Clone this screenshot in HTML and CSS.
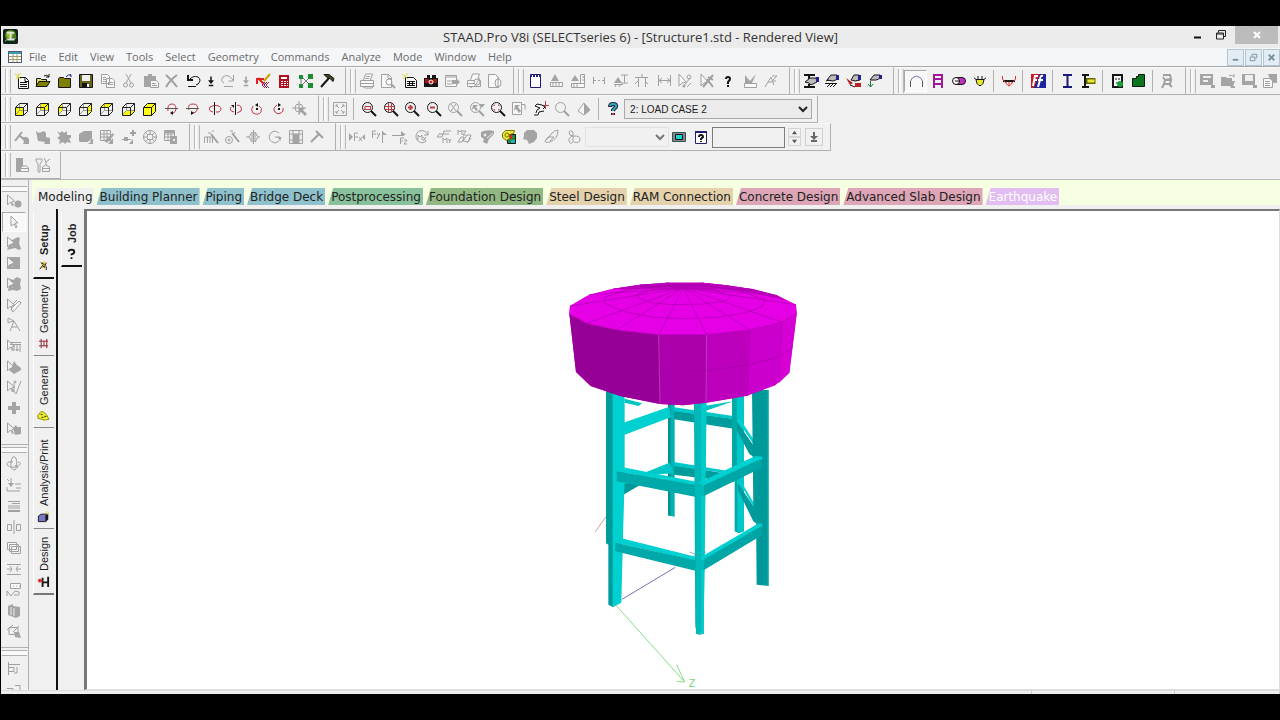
FILE: index.html
```html
<!DOCTYPE html>
<html lang="en">
<head>
<meta charset="utf-8">
<title>STAAD.Pro V8i</title>
<link rel="stylesheet" href="styles.css">
</head>
<body>
<div class="app">
<header class="titlebar">
  <svg class="logo" viewBox="0 0 16 16"><rect width="16" height="16" rx="2" fill="#10241c"/><circle cx="8" cy="7" r="6" fill="#4b7d20"/><circle cx="7" cy="6" r="3.500" fill="#93b82c"/><path d="M4 3h8v2H9v5h3v2H4v-2h3V5H4z" fill="#dce3cf"/><path d="M2 13l3-2M11 13l3-4" stroke="#81a3a8"/></svg>
  <h1 class="title">STAAD.Pro V8i (SELECTseries 6) - [Structure1.std - Rendered View]</h1>
  <div class="winbtns">
    <button class="win" aria-label="Minimize"><svg viewBox="0 0 12 12"><path d="M3 8.500h7" stroke="#111" stroke-width="2"/></svg></button>
    <button class="win" aria-label="Restore"><svg viewBox="0 0 12 12"><path d="M1.500 4h7v6h-7zM1.500 5h7M3.500 3.500V1.500h7v6h-2" stroke="#222"/></svg></button>
    <button class="win close" aria-label="Close"><svg viewBox="0 0 12 12"><path d="M3 3l6 6M9 3l-6 6" stroke="#fff" stroke-width="2"/></svg></button>
  </div>
</header>
<nav class="menubar">
  <svg class="docicon" viewBox="0 0 14 12"><rect x=".5" y=".5" width="13" height="11" fill="#fffef0" stroke="#557"/><path d="M1 2h12" stroke="#38a0ac" stroke-width="2"/><path d="M1 5.500h12M1 8.500h12M5 3v8M9 3v8" stroke="#a09b72"/></svg>
  <button>File</button><button>Edit</button><button>View</button><button>Tools</button><button>Select</button><button>Geometry</button><button>Commands</button><button>Analyze</button><button>Mode</button><button>Window</button><button>Help</button>
  <div class="mdi">
    <button aria-label="Minimize document"><svg viewBox="0 0 12 12"><path d="M3 8.500h6" stroke="#78909c" stroke-width="2"/></svg></button>
    <button aria-label="Restore document"><svg viewBox="0 0 12 12"><path d="M2.500 5.500h5v4h-5zM4.500 5V2.500h5v4H8" stroke="#78909c"/></svg></button>
    <button aria-label="Close document"><svg viewBox="0 0 12 12"><path d="M3 3l6 6M9 3l-6 6" stroke="#78909c" stroke-width="2"/></svg></button>
  </div>
</nav>

<div class="row">
  <div class="bar file" role="toolbar" aria-label="File"><i class="grip"></i>
    <button aria-label="New"><svg viewBox="0 0 16 16"><path class="k w" d="M4.500 4.500h7l3 3v8h-10zM11 4.500v4h3"/><path class="k" d="M6 9.500h7M6 11.500h7M6 13.500h7"/><path class="y" d="M1 1l6 5M7 0L2 6M4 0v6"/></svg></button>
    <button aria-label="Open"><svg viewBox="0 0 16 16"><path fill="#d8d86a" class="k" d="M1.500 13V5.500h4l1 1h5V9"/><path class="k" fill="#808000" d="M1 13.500l3-5h11l-3 5z"/><path class="k" d="M9 3q3-2 5 1v-3M14 4h-3"/></svg></button>
    <button aria-label="Close"><svg viewBox="0 0 16 16"><path class="k" fill="#808000" d="M1.500 14.500v-9l1-1h4l1 1h6v9z"/><path d="M9 4q2-3 5-2l-1-1M14 2v2" stroke="#112288"/></svg></button>
    <button aria-label="Save"><svg viewBox="0 0 16 16"><path class="k" fill="#63631c" d="M1.500 1.500h13v13h-13z"/><path fill="#eee" stroke="none" d="M4 2h8v6H4zM9 11h2v3H9z"/><path class="fk" d="M4 10h5v4H4z"/></svg></button>
    <button aria-label="Copy"><svg viewBox="0 0 16 16"><path class="w" d="M1.500 1.500h6l2 2v7h-8zM6.500 5.500h6l2 2v7h-8zM3 4.500h3M3 6.500h3M8 9.500h5M8 11.500h5M3 8.500h3"/></svg></button>
    <button aria-label="Cut"><svg viewBox="0 0 16 16"><path d="M5 1l5 9M10 1L5 10"/><circle cx="4.500" cy="12" r="2"/><circle cx="10.500" cy="12" r="2"/></svg></button>
    <button aria-label="Paste"><svg viewBox="0 0 16 16"><path class="fg" d="M1 3h4V1h4v2h4v11H1z"/><path class="w" d="M7.500 7.500h6l2 2v5h-8zM9 10.500h4M9 12.500h5"/></svg></button>
    <button aria-label="Delete"><svg viewBox="0 0 16 16"><path stroke-width="2" d="M2 2q6 5 11 12M13 2Q6 7 2 14"/></svg></button>
    <button aria-label="Undo"><svg viewBox="0 0 16 16"><path class="k" stroke-width="2" d="M2 2v5h5"/><path class="k" d="M3 7q4-5 9-3 4 3 0 7l-2 1M2 13.500h8" /></svg></button>
    <button class="narrow" aria-label="Undo list"><svg viewBox="0 0 8 16"><path class="k" stroke-width="2" d="M4 2v6M1 14h6"/><path class="fk" d="M0 7h8l-4 5z"/></svg></button>
    <button aria-label="Redo"><svg viewBox="0 0 16 16"><path d="M13.500 2v6h-5M13 7Q8 0 3 4q-3 4 1 6M4 13.500h9"/></svg></button>
    <button class="narrow" aria-label="Redo list"><svg viewBox="0 0 8 16"><path stroke-width="2" d="M4 2v6M1 14h6"/><path class="fg" d="M0 7h8l-4 5z"/></svg></button>
    <button aria-label="Structure wizard"><svg viewBox="0 0 16 16"><path stroke="#cda000" stroke-width="2" d="M15 1L9 8"/><path d="M2 6h7M3 5l6 6M2 5v6" stroke="#e02020" stroke-width="2"/><path d="M10 9l-3 3 3 3M14 9l-3 3 3 3" stroke="#c01840"/><path d="M12 9l-3 3 3 3" stroke="#202080"/></svg></button>
    <button aria-label="Calculator"><svg viewBox="0 0 16 16"><path fill="#b01020" stroke="none" d="M3 2h10v13H3z"/><path fill="#fff" stroke="none" d="M5 4h6v2H5z"/><path stroke="#fff" stroke-dasharray="2 1" d="M5 8.500h7M5 10.500h7M5 12.500h7"/></svg></button>
    <button aria-label="Nodes"><svg viewBox="0 0 16 16"><path d="M3 3l10 10M3 13L13 3M3 13V3" stroke="#777"/><path fill="#189030" stroke="none" d="M1 2h4v4H1zM10 1h5v5h-5zM1 11h4v4H1zM10 10h5v5h-5z"/></svg></button>
    <button aria-label="Tools"><svg viewBox="0 0 16 16"><path class="k" stroke-width="2" d="M2 14l8-9"/><path fill="#444020" class="k" d="M5 1.500h5l5 4-1 3-3-3-3-1z"/></svg></button>
  </div>
  <div class="bar print" role="toolbar" aria-label="Print"><i class="grip"></i>
    <button aria-label="Print"><svg viewBox="0 0 16 16"><path class="w" d="M4.500 7l2-6h7l-2 6M1.500 7.500h13v6h-13zM1 10.500h13M3 13l3 2h7l2-3M7 3.500h4M6 5.500h4"/></svg></button>
    <button aria-label="Preview"><svg viewBox="0 0 16 16"><path class="w" d="M1.500 1.500h7l3 3v10h-10zM8 1.500v4h3"/><circle cx="9" cy="9" r="3"/><path stroke-width="2" d="M11 11l4 4"/></svg></button>
    <button aria-label="Report setup"><svg viewBox="0 0 16 16"><path class="k w" d="M3.500 4.500h8l3 3v7h-11z"/><path class="k" d="M5 8.500h8M5 10.500h8M5 12.500h8M7.500 8v5M10.500 8v5"/><path class="y" d="M0 1l6 5M6 0L1 6"/></svg></button>
    <button aria-label="Take picture"><svg viewBox="0 0 16 16"><path class="fk" d="M1 5h3V2h3v3h2V2h4v3h2v9H1z"/><path fill="#a01818" stroke="none" d="M2 6h4v4H2zM10 6h4v4h-4z"/><circle cx="8" cy="9" r="2" fill="#c22" stroke="#fff"/></svg></button>
    <button aria-label="Export view"><svg viewBox="0 0 16 16"><path class="w" d="M1.500 2.500h11v11h-11z"/><path d="M1 4h12M3 8h5M3 11h5"/><path class="fg" d="M8 7h4V5l4 4-4 4v-2H8z"/></svg></button>
    <button aria-label="Print report"><svg viewBox="0 0 16 16"><path class="w" d="M4.500 7l2-6h7l-2 6M1.500 7.500h13v6h-13zM1 10.500h13M3 13l3 2"/><circle class="w" cx="11" cy="9" r="3"/><path d="M8 14l6-9"/></svg></button>
    <button aria-label="Report preview"><svg viewBox="0 0 16 16"><path class="w" d="M1.500 1.500h7l3 3v10h-10z"/><ellipse class="w" cx="11" cy="10" rx="3" ry="4"/><path d="M11 4v11"/></svg></button>
  </div>
  <div class="bar annot" role="toolbar" aria-label="Annotation"><i class="grip"></i>
    <button aria-label="Input file"><svg viewBox="0 0 16 16"><path fill="#fff" stroke="#1a1a78" d="M3.500 1.500h10v13h-10z"/><path d="M3 3h11" stroke="#22228a" stroke-width="2" stroke-dasharray="2 1"/></svg></button>
    <button aria-label="Ruler"><svg viewBox="0 0 16 16"><path class="fg" d="M7 1l4 7H3z"/><path class="w" d="M2.500 9.500h12v4h-12zM5 10v3M8 10v3M11 10v3"/></svg></button>
    <button aria-label="Dimension beam"><svg viewBox="0 0 16 16"><path class="fg" d="M5 2l4 6H1z"/><path class="w" d="M1.500 10.500h13v4h-13zM10.500 1.500h4v9h-4zM4 11v3M7 11v3M12 4h2M12 7h2"/></svg></button>
    <button aria-label="Node distance"><svg viewBox="0 0 16 16"><path d="M2.500 4v7M13.500 4v7M2 7.500h3M7 7.500h2M11 7.500h3"/></svg></button>
    <button aria-label="Dimension"><svg viewBox="0 0 16 16"><path class="fg" d="M5 4l4 6H1z"/><path d="M1 11.500h9M8 2h7M11.500 2v8M8 10h7M3 12l-1 2M7 12l-1 2"/></svg></button>
    <button aria-label="Beam length"><svg viewBox="0 0 16 16"><path d="M1 4.500h13M4.500 5v9M11.500 5v9M8 1v3M1 11l3-3M14 11l-3-3"/></svg></button>
    <button aria-label="Horizontal dimension"><svg viewBox="0 0 16 16"><path d="M2.500 2v11M14.500 2v11M3 7.500h11M6 5L3 7.500 6 10M11 5l3 2.500-3 2.500"/></svg></button>
    <button aria-label="Pick node"><svg viewBox="0 0 16 16"><path class="w" d="M2 1v12l3-3 4-1zM6 14l7-9M10 14l4-4"/><circle cx="12" cy="4" r="2"/><circle class="fg" cx="7" cy="13" r="1.500"/></svg></button>
    <button aria-label="Cut dimension"><svg viewBox="0 0 16 16"><path class="w" d="M2 1v12l3-3 4-1z"/><path stroke-width="2" d="M14 2L4 14M8 6l6 8M9 4l5 3"/></svg></button>
    <button aria-label="Query"><svg viewBox="0 0 16 16"><path class="k" stroke-width="2" d="M6 6q0-2 2-2t2 2q0 1-2 3v2M8 12v2"/></svg></button>
    <button aria-label="Label diagrams"><svg viewBox="0 0 16 16"><path class="w" d="M2.500 10.500h12v4h-12z"/><path class="fg" d="M3 2l5 6 6-7-4 9H3z"/></svg></button>
    <button aria-label="Label settings"><svg viewBox="0 0 16 16"><path d="M2 14L8 4l3 8M5 9h4M9 3h5l-5 5h4"/></svg></button>
  </div>
  <div class="bar props" role="toolbar" aria-label="Properties"><i class="grip"></i>
    <button aria-label="Section property"><svg viewBox="0 0 16 16"><path class="k" stroke-width="2" d="M1 2h11M1 14h11M6 3v3M6 11v2"/><path class="k" fill="#bbb" d="M2 9l5-4h6l1 4-6 3-2-2z"/><path fill="#228" stroke="none" d="M13 4h3v5h-3z"/></svg></button>
    <button aria-label="Supports"><svg viewBox="0 0 16 16"><path fill="#bbb" class="k" d="M3 7l4-5h6l1 4-5 2z"/><path fill="#228" stroke="none" d="M12 2h3v5h-3z"/><path class="k" d="M1 10.500h12M3 14l3-3M6 14l3-3M9 14l3-3M2 8l3-1"/></svg></button>
    <button aria-label="Materials"><svg viewBox="0 0 16 16"><path fill="#bbb" class="k" d="M5 7l3-5h5l1 5-5 1z"/><path fill="#228" stroke="none" d="M12 2h3v5h-3z"/><path fill="#b22" stroke="none" d="M0 5l7 5-3 2zM9 10h6v4H9z"/><path class="k" d="M4 12l5 2"/></svg></button>
    <button aria-label="Loading"><svg viewBox="0 0 16 16"><path fill="#bbb" class="k" d="M3 7l4-5h6l1 3-5 2z"/><path fill="#228" stroke="none" d="M12 2h3v4h-3z"/><path d="M3.500 8v6M1 11l2.500 3L6 11" stroke="#158030"/></svg></button>
  </div>
  <div class="bar modes" role="toolbar" aria-label="Modes"><i class="grip"></i>
    <button class="on" aria-label="Beam page"><svg viewBox="0 0 16 16"><path stroke="#7777bb" d="M2.500 8q1-4 6-5 5 1 6 5"/><path stroke="#555" d="M2.500 8v6M14.500 8v6"/></svg></button>
    <button aria-label="Frame"><svg viewBox="0 0 16 16"><path stroke="#a0189a" stroke-width="2" d="M4 15V2h8v13M4 6h8M4 11h8"/></svg></button>
    <button aria-label="Cylinder"><svg viewBox="0 0 16 16"><path class="k" fill="#c030c0" d="M5 4.500h6a3.500 3.500 0 010 7H5z"/><ellipse class="k w" cx="5" cy="8" rx="3.500" ry="3.500"/><path class="k" d="M4 8h5"/></svg></button>
    <button aria-label="Loads"><svg viewBox="0 0 16 16"><path class="k" fill="#e8e830" d="M4 6.500h8l-1 4-2 2H7l-2-2z"/><path class="k" d="M2 5l3 2M14 5l-3 2M6 3v4M10 3v4"/></svg></button>
    <i class="sep"></i>
    <button aria-label="Bending moment"><svg viewBox="0 0 16 16"><path class="k" stroke-width="2" d="M2 8h12"/><path stroke="#dd3030" d="M1.500 3v3l5 6 1.500 1 1.500-1 5-6V3M5 9v1M8 9v4M11 9v1"/></svg></button>
    <i class="sep"></i>
    <button aria-label="Foundation"><svg viewBox="0 0 16 16"><path fill="#c01c28" stroke="none" d="M1 1h10L5 15H1z"/><path fill="#1c24a0" stroke="none" d="M10 1h6v14H4z"/><path stroke="#fff" stroke-width="2" d="M8 3H5L3 13M4 7h3M13 3q-3-1-3 4l-2 7M8 7h5"/></svg></button>
    <i class="sep"></i>
    <button aria-label="Steel"><svg viewBox="0 0 16 16"><path stroke="#181878" stroke-width="2" d="M4 2h9M8.500 2v12M4 14h9"/></svg></button>
    <button aria-label="Connection"><svg viewBox="0 0 16 16"><path fill="#e8e830" stroke="#666600" d="M6.500 5.500h9M6.500 10.500h9M6.500 5v6M7 6h8v4H7z"/><path class="k" stroke-width="2" d="M2 2h7M5 2v12M2 14h7"/></svg></button>
    <i class="sep"></i>
    <button aria-label="Concrete"><svg viewBox="0 0 16 16"><path class="k w" stroke-width="2" d="M4 2h9v12H4z"/><path class="k" d="M7 5v2M10 5v2M7 10h3"/><circle cx="11" cy="11" r="3" fill="#15a03a" stroke="none"/></svg></button>
    <button aria-label="Slab"><svg viewBox="0 0 16 16"><path fill="#0b761e" class="k" d="M2.500 13.500v-8h4v-2h2v-2h6v12z"/></svg></button>
    <i class="sep"></i>
    <button aria-label="Earthquake"><svg viewBox="0 0 16 16"><path stroke-width="2" d="M4 2h7l1 4-6 1-2-3M6 7h6l-1 4H5l1-4M5 11l-2 4M10 11l3 3"/></svg></button>
  </div>
  <div class="bar tail" role="toolbar" aria-label="Views"><i class="grip"></i>
    <button aria-label="New view"><svg viewBox="0 0 16 16"><path class="fg" d="M1 1h13v11h2v3h-4v-3H1z"/><path fill="#eee" stroke="none" d="M4 3h8v2H4zM4 7h5v2H4z"/></svg></button>
    <button aria-label="Open view"><svg viewBox="0 0 16 16"><path class="fg" d="M1 4h5l1 1h5v3h3l-2 5h2v2h-4l-1-2H1z"/><path d="M9 3q3-2 5 1v-3"/></svg></button>
    <button aria-label="Save view"><svg viewBox="0 0 16 16"><path class="fg" d="M1 1h13v11h2v3h-4v-3H1z"/><path fill="#eee" stroke="none" d="M4 2h8v6H4z"/></svg></button>
    <button aria-label="View options"><svg viewBox="0 0 16 16"><path class="w" d="M1.500 5.500h9v9h-9zM3 8.500h5M3 10.500h5M3 12.500h5"/><path class="fg" d="M6 1h9v9h-3L8 6z"/></svg></button>
  </div>
</div>

<div class="row">
  <div class="bar rotate" role="toolbar" aria-label="Rotate"><i class="grip"></i>
    <button aria-label="Front view"><svg viewBox="0 0 16 16"><path class="yf" d="M1 6h9v8H1z"/><use href="#cube"/></svg></button>
    <button aria-label="Back view"><svg viewBox="0 0 16 16"><path class="yf" d="M5 2h9v8H5z"/><use href="#cube"/></svg></button>
    <button aria-label="Left view"><svg viewBox="0 0 16 16"><path class="yf" d="M1 6l4-4v8l-4 4z"/><use href="#cube"/></svg></button>
    <button aria-label="Right view"><svg viewBox="0 0 16 16"><path class="yf" d="M9 6l5-4v8l-5 4z"/><use href="#cube"/></svg></button>
    <button aria-label="Top view"><svg viewBox="0 0 16 16"><path class="yf" d="M1 6l4-4h9l-4 4z"/><use href="#cube"/></svg></button>
    <button aria-label="Bottom view"><svg viewBox="0 0 16 16"><path class="yf" d="M1 14l4-4h9l-4 4z"/><use href="#cube"/></svg></button>
    <button aria-label="Isometric view"><svg viewBox="0 0 16 16"><path class="k" fill="#ffff18" d="M1.500 6.500l4-4h8v8l-4 4h-8zM2 6.500h7.500v8M9.500 6.500l4-4"/></svg></button>
    <button aria-label="Rotate up"><svg viewBox="0 0 16 16"><path class="r" d="M4 10q-1-7 4-7 4 0 4 5-1 5-5 4"/><path d="M1 7.500h13" stroke="#555"/><path class="fk" d="M9 10v4l-3-2z"/></svg></button>
    <button aria-label="Rotate down"><svg viewBox="0 0 16 16"><path class="r" d="M4 9Q2 3 8 3t4 6q-1 3-4 3"/><path d="M1 7.500h13" stroke="#555"/><path class="fk" d="M6 10l3 2-3 2z"/></svg></button>
    <button aria-label="Rotate left"><svg viewBox="0 0 16 16"><path class="r" d="M6 11Q1 10 3 6q4-3 9-1 4 3 0 6H9"/><path class="k" d="M7.500 1v13"/></svg></button>
    <button aria-label="Rotate right"><svg viewBox="0 0 16 16"><path class="r" d="M6 11Q1 10 3 6M9 4q6 1 4 6l-4 2"/><path class="k" d="M7.500 1v13"/><path class="fk" d="M3 4h3v3z"/></svg></button>
    <button aria-label="Spin left"><svg viewBox="0 0 16 16"><path class="r" d="M4 5q-3 4 0 7 5 3 8-1 2-4-2-6"/><path class="fk" d="M9 2v4L6 4zM7 7h2v2H7z"/></svg></button>
    <button aria-label="Spin right"><svg viewBox="0 0 16 16"><path class="r" d="M6 4Q1 7 4 11q4 4 8-1V7"/><path class="fk" d="M7 2l3 2-3 2zM7 7h2v2H7z"/></svg></button>
    <button aria-label="Toggle rotation"><svg viewBox="0 0 16 16"><circle cx="7" cy="7" r="4"/><path d="M7 0v14M0 7h14"/><path class="fg" d="M7 7h6l-2 2 4 4-2 2-4-4-2 2z"/></svg></button>
  </div>
  <div class="bar zoom" role="toolbar" aria-label="Zoom"><i class="grip"></i>
    <button aria-label="Whole structure"><svg viewBox="0 0 16 16"><path d="M1.500 1.500h13v13h-13zM4 4l3 3M12 4L9 7M4 12l3-3M12 12L9 9M4 6V4h2M10 4h2v2M4 10v2h2M12 10v2h-2"/></svg></button>
    <i class="sep"></i>
    <button aria-label="Zoom window"><svg viewBox="0 0 16 16"><use class="k" href="#lens"/><path class="r" d="M4 5.500h6M3 8.500h6M4 5v3M9.500 5v4"/></svg></button>
    <button aria-label="Zoom factor"><svg viewBox="0 0 16 16"><use class="k" href="#lens"/><path class="r" d="M5.500 2v9M8.500 2v9M2 5.500h9M2 8.500h9"/></svg></button>
    <button aria-label="Zoom in"><svg viewBox="0 0 16 16"><use class="k" href="#lens"/><path class="r" stroke-width="2" d="M4 6.500h5M6.500 4v5"/></svg></button>
    <button aria-label="Zoom out"><svg viewBox="0 0 16 16"><use class="k" href="#lens"/><path class="r" stroke-width="2" d="M4 6.500h5"/></svg></button>
    <button aria-label="Zoom extents"><svg viewBox="0 0 16 16"><use href="#lens"/><path d="M4 3l5 7M9 3l-5 7"/></svg></button>
    <button aria-label="Zoom previous"><svg viewBox="0 0 16 16"><use href="#lens"/><path class="fg" d="M4 4h5L7 6l2 3-2 1-2-3-2 2zM10 3h6l-3 4z"/></svg></button>
    <button aria-label="Zoom all"><svg viewBox="0 0 16 16"><use class="k" href="#lens"/><path class="r" d="M4 5V4h1M8 4h1v1M4 8v1h1M8 9h1V8"/></svg></button>
    <button aria-label="Previous view"><svg viewBox="0 0 16 16"><path class="w" d="M1.500 1.500h9v12h-9zM10 3.500h4v5"/><path class="fg" d="M4 4h5L7 6l3 4-2 2-3-4-2 2z"/></svg></button>
    <button aria-label="Pan"><svg viewBox="0 0 16 16"><path class="r" d="M12.500 0v8M9 4.500h7"/><path class="k" d="M1 14h4l1-3 5-1M3 12l1-3 3-2-5-2 2-2 5 1 3 2-2 2"/></svg></button>
    <button aria-label="Magnifier"><svg viewBox="0 0 16 16"><use href="#lens"/></svg></button>
    <button aria-label="Perspective"><svg viewBox="0 0 16 16"><path class="w" d="M8 2L2 10l6 4 6-5z"/><path class="fg" d="M8 2v12l6-5z"/></svg></button>
    <i class="sep"></i>
    <button aria-label="Help"><svg viewBox="0 0 16 16"><path stroke="#22224e" stroke-width="4" d="M5 6q0-3 3-3 4 0 3 3l-3 3v1M8 12v2"/><path stroke="#32a9ae" stroke-width="2" d="M5 5q0-2 3-2 4 0 3 3l-3 3v1"/><path stroke="#c33" stroke-width="2" d="M8 12v2"/></svg></button>
    <select class="loadcase" aria-label="Load case"><option>2: LOAD CASE 2</option></select>
  </div>
</div>

<div class="row">
  <div class="bar geom" role="toolbar" aria-label="Geometry"><i class="grip"></i>
    <button aria-label="Add beams"><svg viewBox="0 0 16 16"><path stroke-width="2" d="M1 12L8 3M6 7l6 5"/><path class="fg" d="M8 8h5l2 2v5h-6l1-2z"/></svg></button>
    <button aria-label="Add plates"><svg viewBox="0 0 16 16"><path class="fg" d="M1 2l3 2 5-2 2 2v4l4 1v6H9l1-2-7-1z"/></svg></button>
    <button aria-label="Mesh"><svg viewBox="0 0 16 16"><path class="fg" d="M1 2l3 2 2-2 2 2 3-2v4h4v3h-2l2 5-4-1-2 2-2-2-4 2 1-4-3-2 3-2z"/></svg></button>
    <button aria-label="Solids"><svg viewBox="0 0 16 16"><path class="fg" d="M1 5l5-3h8v7l-4 4H2L1 12zM13 10h2v5H9l3-1z"/></svg></button>
    <button aria-label="Surface"><svg viewBox="0 0 16 16"><path d="M1.500 1.500h10v10h-10zM5 2v9M8 2v9M2 5h9M2 8h9"/><path class="fg" d="M5 12L14 4l1 2-7 8zM14 9v6H9z"/></svg></button>
    <button aria-label="Insert node"><svg viewBox="0 0 16 16"><path d="M1 10.500h9"/><path stroke-width="2" d="M12 1v6M9 4h6"/><path class="fg" d="M3 8h4v4H3zM12 10v5H8z"/></svg></button>
    <button aria-label="Sphere mesh"><svg viewBox="0 0 16 16"><circle cx="8" cy="8" r="6.500"/><circle cx="8" cy="8" r="3"/><path d="M8 1v5M8 10v5M1 8h4M11 8h4M3 3l3 3M10 10l3 3M13 3l-3 3M3 13l3-3"/></svg></button>
    <button aria-label="Grid"><svg viewBox="0 0 16 16"><path d="M1.500 1.500h10v10h-10zM5 2v9M8 2v9M2 5h9M2 8h9"/><path class="fg" d="M7 7h7v8H7zM1 1h10v3H1z"/><path fill="#eee" stroke="none" d="M10 10h2v2h-2z"/></svg></button>
  </div>
  <div class="bar gen" role="toolbar" aria-label="Generate"><i class="grip"></i>
    <button aria-label="Translational repeat"><svg viewBox="0 0 16 16"><path d="M1.500 14V8h8v6M4.500 8v6M7 8v6M5 4h3M10 1v2"/><path stroke-width="2" d="M8 5l7 9"/></svg></button>
    <button aria-label="Circular repeat"><svg viewBox="0 0 16 16"><circle cx="5" cy="11" r="3.500"/><circle cx="5" cy="11" r="1"/><path d="M6 2h3M9 6l2-3"/><path stroke-width="2" d="M8 4l7 9"/></svg></button>
    <button aria-label="Mirror"><svg viewBox="0 0 16 16"><path d="M8.500 1v14M7 3v10L4 8zM10 3v10l3-5zM1 8h3M13 8h2"/></svg></button>
    <button aria-label="Rotate"><svg viewBox="0 0 16 16"><path d="M12 4Q7 0 3 5q-3 7 5 9l4-2M8 8h5v4"/><path class="fg" d="M10 8h5l-2 3z"/></svg></button>
    <button aria-label="Grid select"><svg viewBox="0 0 16 16"><path d="M1.500 1.500h13v13h-13zM2 5h12M2 11h12M5 2v12M11 2v12"/><path class="fg" d="M5 5h6v9H5z"/></svg></button>
    <button aria-label="Split beam"><svg viewBox="0 0 16 16"><path stroke-width="2" d="M2 13L10 5M7 2l7 7"/></svg></button>
  </div>
  <div class="bar result" role="toolbar" aria-label="Results"><i class="grip"></i>
    <button aria-label="Axial force"><svg viewBox="0 0 16 16"><path class="fg" d="M0 4l4 4-4 4zM16 5l-3 3 3 3z"/><path d="M5.500 12V4H9M6 8h3M10 8l3 4M13 8l-3 4"/></svg></button>
    <button aria-label="Shear Y"><svg viewBox="0 0 16 16"><path d="M1.500 9V2H5M2 5h3M6 4l2 3M9 4l-3 6M11.500 2v12"/><path class="fg" d="M11 2l5 4h-5z"/></svg></button>
    <button aria-label="Shear Z"><svg viewBox="0 0 16 16"><path d="M0 6.500h12M8.500 15V9H12M9 12h2M12 11h3l-3 4h3"/><path class="fg" d="M9 2l5 4H9z"/></svg></button>
    <button aria-label="Torsion"><svg viewBox="0 0 16 16"><path d="M14 6Q11 0 5 2 0 6 3 11q5 5 9 1M4 11V6l2 2 2-2v5M9 8l3 4M12 8l-3 4M14 2v4h-4"/></svg></button>
    <button aria-label="Bending Y"><svg viewBox="0 0 16 16"><path d="M1 8h5l2-6h7M4 5h9M7 14V9l2 2 2-2v5M12 10l2 2M15 10l-2 4M1 8l3-4"/></svg></button>
    <button aria-label="Bending Z"><svg viewBox="0 0 16 16"><path d="M1 6V1l2 2 2-2v5M6 2h3L6 6h3M1 13l3-5h3l-2 5zM6 12l4-6h4l-3 7zM10 14l4-5"/></svg></button>
    <button aria-label="Stress"><svg viewBox="0 0 16 16"><path class="fg" d="M2 3q6-3 13-1v3l-5 5-2 5-4-2 1-3-3-2z"/><circle fill="#eee" cx="6" cy="6" r="2"/><path stroke="#eee" d="M8 9l6-5"/></svg></button>
    <button aria-label="Plate contour"><svg viewBox="0 0 16 16"><path fill="#1d8b40" class="k" d="M6.500 5.500h8v9h-8z"/><path fill="#d22" stroke="none" d="M7 6h4v4H7z"/><path fill="#20b0c0" stroke="none" d="M10 11h4v3h-4z"/><path fill="#ebe740" stroke="#777700" d="M1.500 4.500l3-3h9l-1 3-4 1v4l-3 2-4-3z"/><circle cx="6" cy="6" r="2" stroke="#777700"/></svg></button>
    <button aria-label="Solid contour"><svg viewBox="0 0 16 16"><path class="fg" d="M2 4l3-3h7l3 3v5l-3 4-5 2-2-4-4-1 1-3z"/></svg></button>
    <button aria-label="Deflection"><svg viewBox="0 0 16 16"><path d="M1 12q5-4 6-7 4-4 7-4 0 9-8 12-5 1-5-1l3-4h6l-4 4"/></svg></button>
    <button aria-label="Mode shape"><svg viewBox="0 0 16 16"><path d="M3 3q1-3 4 0v10q-3 3-4-1t5-5q6 0 6 3 0 5-6 3M3 3q0 4 4 4"/></svg></button>
    <select class="modes-select" aria-label="Mode" disabled><option></option></select>
    <button aria-label="Animate"><svg viewBox="0 0 16 16"><path fill="#858585" stroke="#355" d="M1.500 3.500h13v9h-13z"/><path class="k" fill="#15d5d5" d="M4.500 5.500h7v5h-7z"/></svg></button>
    <button aria-label="Query window"><svg viewBox="0 0 16 16"><path fill="#fff" stroke="#202070" d="M2.500 2.500h11v12h-11z"/><path stroke="#202070" stroke-width="2" d="M2 3h12"/><path class="k" stroke-width="2" d="M6 8q0-2 2-2t2 2L8 10v1M8 12v1"/></svg></button>
    <input class="scale" type="text" aria-label="Scale">
    <span class="spin"><button aria-label="Increase"><svg viewBox="0 0 8 6"><path fill="#555" stroke="none" d="M1 5h6L4 1z"/></svg></button><button aria-label="Decrease"><svg viewBox="0 0 8 6"><path fill="#555" stroke="none" d="M1 1h6L4 5z"/></svg></button></span>
    <button class="apply" aria-label="Apply scale"><svg viewBox="0 0 16 16"><path stroke="#666" stroke-width="2" d="M8 3v5M5 12h6"/><path fill="#666" stroke="none" d="M4 7h8l-4 4z"/></svg></button>
  </div>
</div>

<div class="row last">
  <div class="bar short" role="toolbar" aria-label="Structure"><i class="grip"></i>
    <button aria-label="Building"><svg viewBox="0 0 16 16"><path class="fg" d="M2 1h7v14H2z"/><path class="w" d="M6.500 14.500V11l2-2h4l2 2v3.500zM7 11.500h7"/></svg></button>
    <button aria-label="Crane"><svg viewBox="0 0 16 16"><path d="M1 2h6v2L5 7v8H3V7L1 4zM9 1l2 4 4-3M11 5v3M7.500 14.500V10l3-2 4 2v4.500zM8 11.500h6"/></svg></button>
  </div>
</div>

<div class="work">
  <aside class="tools">
    <div class="vbar" role="toolbar" aria-label="Cursors"><i class="vgrip"></i>
      <button aria-label="Nodes cursor"><svg viewBox="0 0 16 16"><use href="#cur"/><circle class="fg" cx="12" cy="11" r="3.500"/></svg></button>
      <button class="on" aria-label="Beams cursor"><svg viewBox="0 0 16 16"><path class="w" d="M5 2v10l3-2 2 4 1-1-2-4h3z"/></svg></button>
      <button aria-label="Plates cursor"><svg viewBox="0 0 16 16"><path class="fg" d="M1 3l5 2 6-3 2 1-1 5 2 6-2 1-4-2-8 2 2-5z"/><use href="#cur"/></svg></button>
      <button aria-label="Surface cursor"><svg viewBox="0 0 16 16"><path class="fg" d="M1 2h13v12H1z"/><use href="#cur"/></svg></button>
      <button aria-label="Solids cursor"><svg viewBox="0 0 16 16"><path class="fg" d="M2 2l5 2 4-3 4 2-1 5 1 5-4 2-4-1-5 1 1-5z"/><use href="#cur"/></svg></button>
      <button aria-label="Geometry cursor"><svg viewBox="0 0 16 16"><use href="#cur"/><path class="w" d="M5 12L13 4l2 2-8 9zM7 7l4-4"/></svg></button>
      <button aria-label="Text cursor"><svg viewBox="0 0 16 16"><path d="M2 1v5l2-1 4-1zM4 14L8 4l6 10M6 10h5"/></svg></button>
      <button aria-label="Load cursor"><svg viewBox="0 0 16 16"><use href="#cur"/><path d="M4 4.500h11M4 6.500h11M8 6v7M11 6v7M14 6v8M10 11l1 2 2-2"/></svg></button>
      <button aria-label="Support cursor"><svg viewBox="0 0 16 16"><use href="#cur"/><path class="fg" d="M8 2l3 4 4 3v2l-7 4-5-4 3-3z"/></svg></button>
      <button aria-label="Release cursor"><svg viewBox="0 0 16 16"><use href="#cur"/><path d="M8 4v9l2 2 5-13M6 10l3 4"/><circle cx="9" cy="3" r="1"/></svg></button>
      <button aria-label="Joint cursor"><svg viewBox="0 0 16 16"><path class="fg" d="M6 2h4v4h4v4h-4v4H6v-4H2V6h4z"/></svg></button>
      <button aria-label="Solid edit cursor"><svg viewBox="0 0 16 16"><use href="#cur"/><path class="fg" d="M7 7l3-3 1 2h4v7l-6 1z"/></svg></button>
    </div>
    <div class="vbar" role="toolbar" aria-label="Selection"><i class="vgrip"></i>
      <button aria-label="Rotate object"><svg viewBox="0 0 16 16"><path d="M5 6q1-8 5-4 2 8-1 12-5 0-4-8M7 6Q0 5 1 9q5 4 11 1 5-3 0-4M9 9l3 3"/></svg></button>
      <button aria-label="Move down"><svg viewBox="0 0 16 16"><path d="M1 10v4h13M5 1v6M9 7h6M10 11h5M1 2l2 2"/><path class="fg" d="M2 6h6l-3 4z"/></svg></button>
      <button aria-label="Lines"><svg viewBox="0 0 16 16"><path d="M2 3.500h12M6 5.500h8M2 8h12M2 10h12"/><path stroke-width="2" d="M2 13h12"/></svg></button>
      <button aria-label="Mirror pair"><svg viewBox="0 0 16 16"><path d="M1.500 5.500h4v6h-4zM10.500 5.500h4v6h-4zM8 1v14"/></svg></button>
      <button aria-label="Layers"><svg viewBox="0 0 16 16"><path class="w" d="M1.500 2.500h9v7h-9zM3.500 4.500h9v7h-9zM5.500 6.500h9v7h-9z"/></svg></button>
      <button aria-label="Align"><svg viewBox="0 0 16 16"><path d="M1 3.500h14M1 13.500h14M1 8h5l-2-3M6 8l-2 3M10 8l2-3M10 8l2 3M10 8h5"/></svg></button>
      <button aria-label="Cable"><svg viewBox="0 0 16 16"><path class="w" d="M4.500 1.500h10v5h-10zM7 4h1M10 4h1M13 4h1"/><path d="M1 14V9l4 5 4-5 4 1v3H8"/></svg></button>
      <button aria-label="Book"><svg viewBox="0 0 16 16"><path class="fg" d="M2 3l5-2v2l7 1v9l-4 2-8-3z"/><path stroke="#eee" d="M5 4v8M8 5v8"/></svg></button>
      <button aria-label="Transform"><svg viewBox="0 0 16 16"><path d="M3 3.500h9v7H3zM1 6l6-5M7 8l6-6"/><path class="fg" d="M8 8h5l2 6-6-1z"/></svg></button>
    </div>
    <div class="vbar cut" role="toolbar" aria-label="Arrange"><i class="vgrip"></i>
      <button aria-label="Align left"><svg viewBox="0 0 16 16"><path d="M2.500 2v13M3 4.500h11M3 7.500h5v4H3M11 7v6H8"/></svg></button>
      <button aria-label="Arrange"><svg viewBox="0 0 16 16"><path d="M1 7.500h6v5H1M9 4.500h5v9"/></svg></button>
    </div>
  </aside>
  <main class="main">
    <div class="sheets" role="tablist">
      <button class="sheet modeling" role="tab" aria-selected="true">Modeling</button>
      <button class="sheet blue" role="tab">Building Planner</button>
      <button class="sheet blue" role="tab">Piping</button>
      <button class="sheet blue" role="tab">Bridge Deck</button>
      <button class="sheet mint" role="tab">Postprocessing</button>
      <button class="sheet green" role="tab">Foundation Design</button>
      <button class="sheet sand" role="tab">Steel Design</button>
      <button class="sheet sand" role="tab">RAM Connection</button>
      <button class="sheet rose" role="tab">Concrete Design</button>
      <button class="sheet rose" role="tab">Advanced Slab Design</button>
      <button class="sheet quake" role="tab">Earthquake</button>
    </div>
    <div class="pages">
      <div class="vtabs" role="tablist">
        <button class="vtab t-setup" role="tab" aria-selected="true"><svg viewBox="0 0 14 14"><path fill="#e6c83a" stroke="none" d="M5 3h4v7H5z"/><path class="k" d="M3 11l3-4 2 2 2-5M4 4l4 2M10 8v4"/></svg>Setup</button>
        <button class="vtab t-geo" role="tab"><svg viewBox="0 0 14 14"><path stroke="#8e1d2c" d="M2 4.500h10M2 9.500h10M4.500 2v10M7.500 4v6M10.500 2v10"/></svg>Geometry</button>
        <button class="vtab t-gen" role="tab"><svg viewBox="0 0 14 14"><path fill="#eeee22" stroke="#8a8a10" d="M1 10V7l3-4h3l3 3 3 5-5 1z"/><path class="k" d="M4 6h2M8 8h2M5 9h2"/></svg>General</button>
        <button class="vtab t-ana" role="tab"><svg viewBox="0 0 14 14"><path class="k" fill="#7777c8" d="M1.500 6.500l3-2h7v6l-2 2h-8z"/><path class="fk" d="M9 6l3-2v6l-3 2z"/><path class="y" d="M9 4l2-3M11 5l2-3"/></svg>Analysis/Print</button>
        <button class="vtab t-des" role="tab"><svg viewBox="0 0 14 14"><path class="k" stroke-width="2" d="M6 8h6M12 2v11M6 3v10"/><path stroke="#d22" stroke-width="2" d="M1 6h5M3 4v4"/></svg>Design</button>
      </div>
      <div class="vtabs sub" role="tablist">
        <button class="vtab t-job" role="tab" aria-selected="true"><svg viewBox="0 0 14 14"><path class="k" stroke-width="2" d="M4 5q0-2 3-2 3 0 3 2 0 2-3 3v1M7 11v2"/></svg>Job</button>
      </div>
      <section class="view" aria-label="Rendered view">
        <svg class="scene" viewBox="553 280 260 408">
          <g transform="translate(580 380) scale(.333333)">
            <path d="M78 410L46 455" stroke="#b06a6a" stroke-width="2"/>
            <path d="M126 658L286 562" stroke="#7070b8" stroke-width="3"/>
            <path d="M108 676L314 906M290 854L314 906L290 904" stroke="#86df86" stroke-width="3" fill="none"/>
            <path d="M328 516l50 18M340 528l38-12" stroke="#809090" stroke-width="2"/>
            <text x="326" y="920" font-size="33" fill="#70d878">Z</text>
            <path fill="#00b4b4" d="M264 70H284V410L264 406z"/><path fill="#009292" d="M264 70h8v338l-8-2z"/>
            <path fill="#00d0d0" d="M130 128L268 80L272 112L130 166z"/>
            <path fill="#009c9c" d="M282 92L460 116V146L282 118z"/><path fill="#00c8c8" d="M282 82L460 108V117L282 94z"/>
            <path fill="#00c8c8" d="M130 304L268 248L282 280L210 284L130 344z"/><path fill="#009898" d="M130 312L210 298L130 344z"/>
            <path fill="#009c9c" d="M282 256L462 284V306L282 284z"/><path fill="#00c8c8" d="M282 246L440 272L440 280L282 258z"/>
            <path fill="#00c4c4" d="M134 56L186 70L176 78L134 68zM372 78L460 64L378 92z"/>
            <path fill="#00a8a8" d="M456 40H492V454L476 460L464 454V304L456 300z"/><path fill="#00c8c8" d="M470 40H492V454L472 458z"/>
            <path fill="#009a9a" d="M470 124L520 196V230L508 222L470 150zM474 310L528 390V430L520 424L474 330z"/><path fill="#00d2d2" d="M472 120L482 120L524 184V198zM476 302L488 312L528 380V394z"/>
            <path fill="#009999" d="M516 30H566V618L530 614L528 400L520 380z"/><path d="M564 30V618" stroke="#00b8b8" stroke-width="3"/>
            <path fill="#009c9c" d="M78 30H100V682L85 674V494L78 490z"/><path fill="#00d0d0" d="M98 30L134 40V300L130 432L124 668L98 682z"/>
            <path fill="#00d0d0" d="M110 262L122 260L352 306V318L110 274zM106 476L122 474L352 532V544L106 488z"/>
            <path fill="#00a9a9" d="M110 274L352 316V352L110 304zM106 488L352 542V574L106 514z"/>
            <path fill="#00aaaa" d="M342 66H378L371 762L354 764L346 740z"/><path fill="#00caca" d="M362 66H380L371 762H362z"/><path fill="#00b9b9" d="M344 66H362V762H348z"/>
            <path fill="#00d0d0" d="M356 308L526 228L546 230L548 238L374 318zM358 534L536 430L546 432L548 440L374 540z"/>
            <path fill="#00a6a6" d="M372 316L544 236L548 262L372 348zM372 538L544 438L548 464L372 570z"/>
            <path fill="#00b9b9" d="M346 316L372 316V348H346zM346 542L372 540V570H350z"/>
          </g>
          <g transform="translate(540 270) scale(.333333)">
            <path fill="#cc00cc" d="M88 130L90 108L148 74L220 56L300 44L380 38H490L560 46L640 58L710 76L768 104L770 134L748 308L706 346L620 378L500 398L430 406L360 402L240 378L152 348L108 306z"/>
            <path fill="#960096" d="M88 132L140 160L230 180L356 194L360 402L240 378L152 348L108 306z"/>
            <path fill="#ab00ab" d="M356 194H500L498 398L430 406L360 402z"/>
            <path fill="#bc00bc" d="M500 194L630 180L624 376L498 398z"/>
            <path fill="#d600d6" d="M726 156L770 130L748 308L716 340z"/>
            <path fill="#e600e6" d="M88 132L90 108L148 74L220 56L300 44L380 38H490L560 46L640 58L710 76L768 104L770 130L726 156L630 180L500 194H356L230 180L140 160z"/>
            <path fill="#a000a0" d="M220 56L300 44L380 38H490L560 46L640 58L710 76L740 92L640 68L540 56L430 50L300 56z" opacity=".65"/>
            <g fill="none" stroke="#a800ac" stroke-width="2">
              <path d="M430 54L90 108M430 54L140 160M430 54L230 180M430 54L356 194M430 54L500 194M430 54L630 180M430 54L726 156M430 54L768 104M430 54L710 76M430 54L640 58M430 54L300 44M430 54L220 56M430 54L148 74M430 54L380 38M430 54L490 38"/>
              <path d="M194 100L250 124L340 142L430 146L530 142L620 128L668 108L674 90L600 62L480 46H370L260 60L194 82z"/>
              <path d="M290 80L330 98L400 104L490 102L560 92L572 78L520 60L430 50L340 60L292 72z"/>
              <path d="M360 300L500 302L630 284L722 258L758 230" stroke="#a000a0"/>
              <path d="M500 194L498 398M356 194L360 402" stroke="#c34cc3"/>
              <path d="M630 180L624 376M726 156L716 330" stroke="#b300b3"/>
              <path d="M88 132L140 160L230 180L356 194H500L630 180L726 156L770 130" stroke="#b400b4"/>
            </g>
          </g>
        </svg>
      </section>
    </div>
  </main>
</div>
<footer class="status"><span></span><span></span><span></span></footer>
</div>
<svg class="defs" aria-hidden="true">
  <defs>
    <g id="cube"><path fill="none" stroke="#999" d="M5.500 2v7.500h8M5.500 9.500l-4 4"/><path fill="none" stroke="#222" d="M1.500 6.500h8v8h-8zM1.500 6.500l4-4h8v8l-4 4M9.500 6.500l4-4"/></g>
    <g id="lens"><circle cx="6.500" cy="6.500" r="5"/><path stroke-width="2" d="M10 10l5 5"/></g>
    <g id="cur"><path fill="#f0f0f0" d="M1.500 2v10l3-3 2 4 1-1-2-3 3-1z"/></g>
  </defs>
</svg>
</body>
</html>
```
FILE: styles.css
```css
* { box-sizing: border-box; }
body { margin: 0; background: #000; font-family: "Open Sans", "Noto Sans", sans-serif; }
button, input, select { font: inherit; color: inherit; margin: 0; padding: 0; border: 0; background: none; }
svg { display: block; fill: none; stroke: #a0a0a0; }
.defs { position: absolute; width: 0; height: 0; }
.app { height: 100vh; padding: 26px 0 26px 1px; display: flex; flex-direction: column; overflow: hidden; }

.titlebar { position: relative; flex: none; height: 22px; background: #ebebeb; display: flex; align-items: center; padding-left: 2px; }
.logo { width: 15px; height: 15px; stroke: none; margin-bottom: 2px; }
.title { flex: 1; margin: 0; text-align: center; font-size: 13px; line-height: 22px; font-weight: 400; color: #333; padding-left: 78px; }
.winbtns { display: flex; align-self: flex-start; padding-right: 2px; }
.win { width: 24px; height: 18px; display: grid; place-items: center; }
.win svg { width: 12px; height: 12px; }
.close { width: 43px; background: #bcbcbc; margin-left: 2px; }

.menubar { flex: none; height: 19px; background: #f5f6f8; border-bottom: 1px solid #a8a8a8; display: flex; align-items: center; padding-left: 7px; font-size: 11px; line-height: 18px; color: #6b6b6b; gap: 12px; }
.docicon { width: 14px; height: 12px; margin-right: -5px; }
.mdi { display: flex; gap: 1px; margin-left: auto; }
.mdi button { width: 17px; height: 17px; display: grid; place-items: center; background: #e1ecf5; border: 1px solid #b5c5d2; }
.mdi svg { width: 11px; height: 11px; }

.row { flex: none; display: flex; height: 28px; background: #f0f0f0; }
.bar { flex: none; display: flex; align-items: center; height: 28px; padding: 0 7px 0 4px; border: solid #b0b0b0; border-width: 0 1px 1px 0; border-top: 1px solid #fafafa; background: #f1f1f1; }
.bar button { flex: 1 1 0; min-width: 0; height: 22px; display: grid; place-items: center; }
.bar button svg { width: 16px; height: 16px; }
.bar .narrow { flex: 0 0 13px; }
.bar .narrow svg { width: 8px; height: 12px; }
.grip { flex: none; width: 6px; height: 24px; border: solid #b8b8b8; border-width: 0 1px; background: #fafafa; box-shadow: inset -2px 0 #eee; }
.sep { flex: none; width: 1px; height: 22px; background: #b0b0b0; margin: 0 4px 0 3px; }
.on { border: 1px solid #a8a8a8; border-right-color: #fff; border-bottom-color: #fff; background: #f8f8f8; }
.file { width: 345px; }
.print { width: 168px; }
.annot { width: 276px; }
.props { width: 104px; }
.modes { width: 292px; }
.tail { flex: 1 0 94px; padding-right: 0; border-right: 0; }
.rotate { width: 318px; }
.zoom { width: 499px; padding-right: 5px; }
.geom { width: 189px; }
.gen { width: 146px; }
.result { width: 495px; }
.last { height: 29px; border-bottom: 1px solid #b8b8b8; }
.short { width: 60px; }

.k { stroke: #151515; }
.r { stroke: #c23a44; }
.y { stroke: #d8d840; }
.w { fill: #f8f8f8; }
.fg { fill: #a4a4a4; stroke: none; }
.fk { fill: #151515; stroke: none; }
.yf { fill: #f8f800; stroke: none; }

.loadcase { flex: none; width: 188px; height: 20px; border: 1px solid #a8a8a8; background: #ebebeb; padding-left: 1px; font: 10px "Liberation Sans", sans-serif; color: #222; }
.modes-select { flex: none; width: 84px; height: 20px; border: 1px solid #d5d5d5; opacity: .5; }
.scale { flex: none; width: 73px; height: 21px; border: 1px solid #7c7c7c; background: #f0f0f0; }
.spin { flex: none; width: 13px; margin: 0 4px 0 3px; }
.bar .spin button { width: 13px; height: 9px; border: 1px solid #d5d5d5; }
.bar .spin svg { width: 7px; height: 5px; }
.bar .apply { flex: none; width: 18px; height: 18px; border: 1px solid #cfcfcf; }

.work { flex: 1; min-height: 0; display: flex; background: #f0f0f0; }
.tools { flex: none; width: 28px; padding-top: 4px; border-right: 1px solid #b0b0b0; overflow: hidden; }
.vbar { display: grid; grid-auto-rows: 1fr; height: 203px; padding: 9px 2px 5px 1px; border-bottom: 1px solid #b0b0b0; position: relative; }
.vbar:first-child { height: 261px; padding-top: 7px; }
.vbar.cut { height: 52px; padding-bottom: 0; border: 0; }
.vgrip { position: absolute; top: 2px; left: 1px; right: 1px; height: 6px; border: solid #b0b0b0; border-width: 1px 0; background: #fafafa; }
.vbar button { display: grid; place-items: center; }
.vbar svg { width: 16px; height: 16px; }

.main { flex: 1; min-width: 0; display: flex; flex-direction: column; padding-left: 3px; }
.sheets { flex: none; display: flex; align-items: flex-start; gap: 3px; height: 29px; padding-top: 8px; background: #f7ffe3; border-bottom: 4px solid #f0f0f0; font: 12px/17px "DejaVu Sans", sans-serif; color: #222; }
.sheet { height: 17px; padding: 1px 2px 0 3px; white-space: nowrap; line-height: 16px; clip-path: polygon(5px 0, 100% 0, 100% 100%, 0 100%); }
.modeling { padding-left: 6px; padding-right: 1px; background: #f0f0f0; }
.blue { background: #8fc1cc; }
.mint { background: #89c29a; }
.green { background: #91b882; }
.sand { background: #e5d2ac; }
.rose { background: #dda5b5; }
.quake { background: #e1bdf1; color: #fff; }

.pages { flex: 1; min-height: 0; display: flex; }
.vtabs { width: 26px; padding: 3px 2px 0 1px; border-right: 2px solid #111; font: 11px "Liberation Sans", sans-serif; color: #222; }
.vtabs.sub { padding-left: 3px; border: 0; }
.vtab { width: 100%; display: flex; align-items: center; justify-content: flex-start; padding: 5px 0; gap: 4px; writing-mode: vertical-rl; transform: rotate(180deg); border-top: 1px solid #888; border-right: 1px solid #fff; }
.vtab svg { width: 13px; height: 13px; transform: rotate(180deg); }
.vtab[aria-selected="true"] { font-weight: 700; border-top: 2px solid #111; }
.t-setup { height: 67px; }
.t-geo { height: 77px; }
.t-gen { height: 72px; }
.t-ana { height: 101px; }
.t-des { height: 66px; border-top: 2px solid #777; }
.t-job { height: 55px; }
.view { flex: 1; min-width: 0; background: #fff; border: solid #777; border-width: 2px 1px 1px 3px; border-right-color: #ddd; border-bottom-color: #ddd; overflow: hidden; display: flex; justify-content: center; align-items: flex-start; padding-top: 69px; }
.scene { flex: none; width: 260px; height: 408px; stroke: none; font-family: "Liberation Sans", sans-serif; }

.status { flex: none; height: 4px; background: #eee; border-top: 1px solid #ddd; display: grid; grid-template-columns: 1fr 143px 105px; }
.status span { border-right: 1px solid #ccc; }
```
